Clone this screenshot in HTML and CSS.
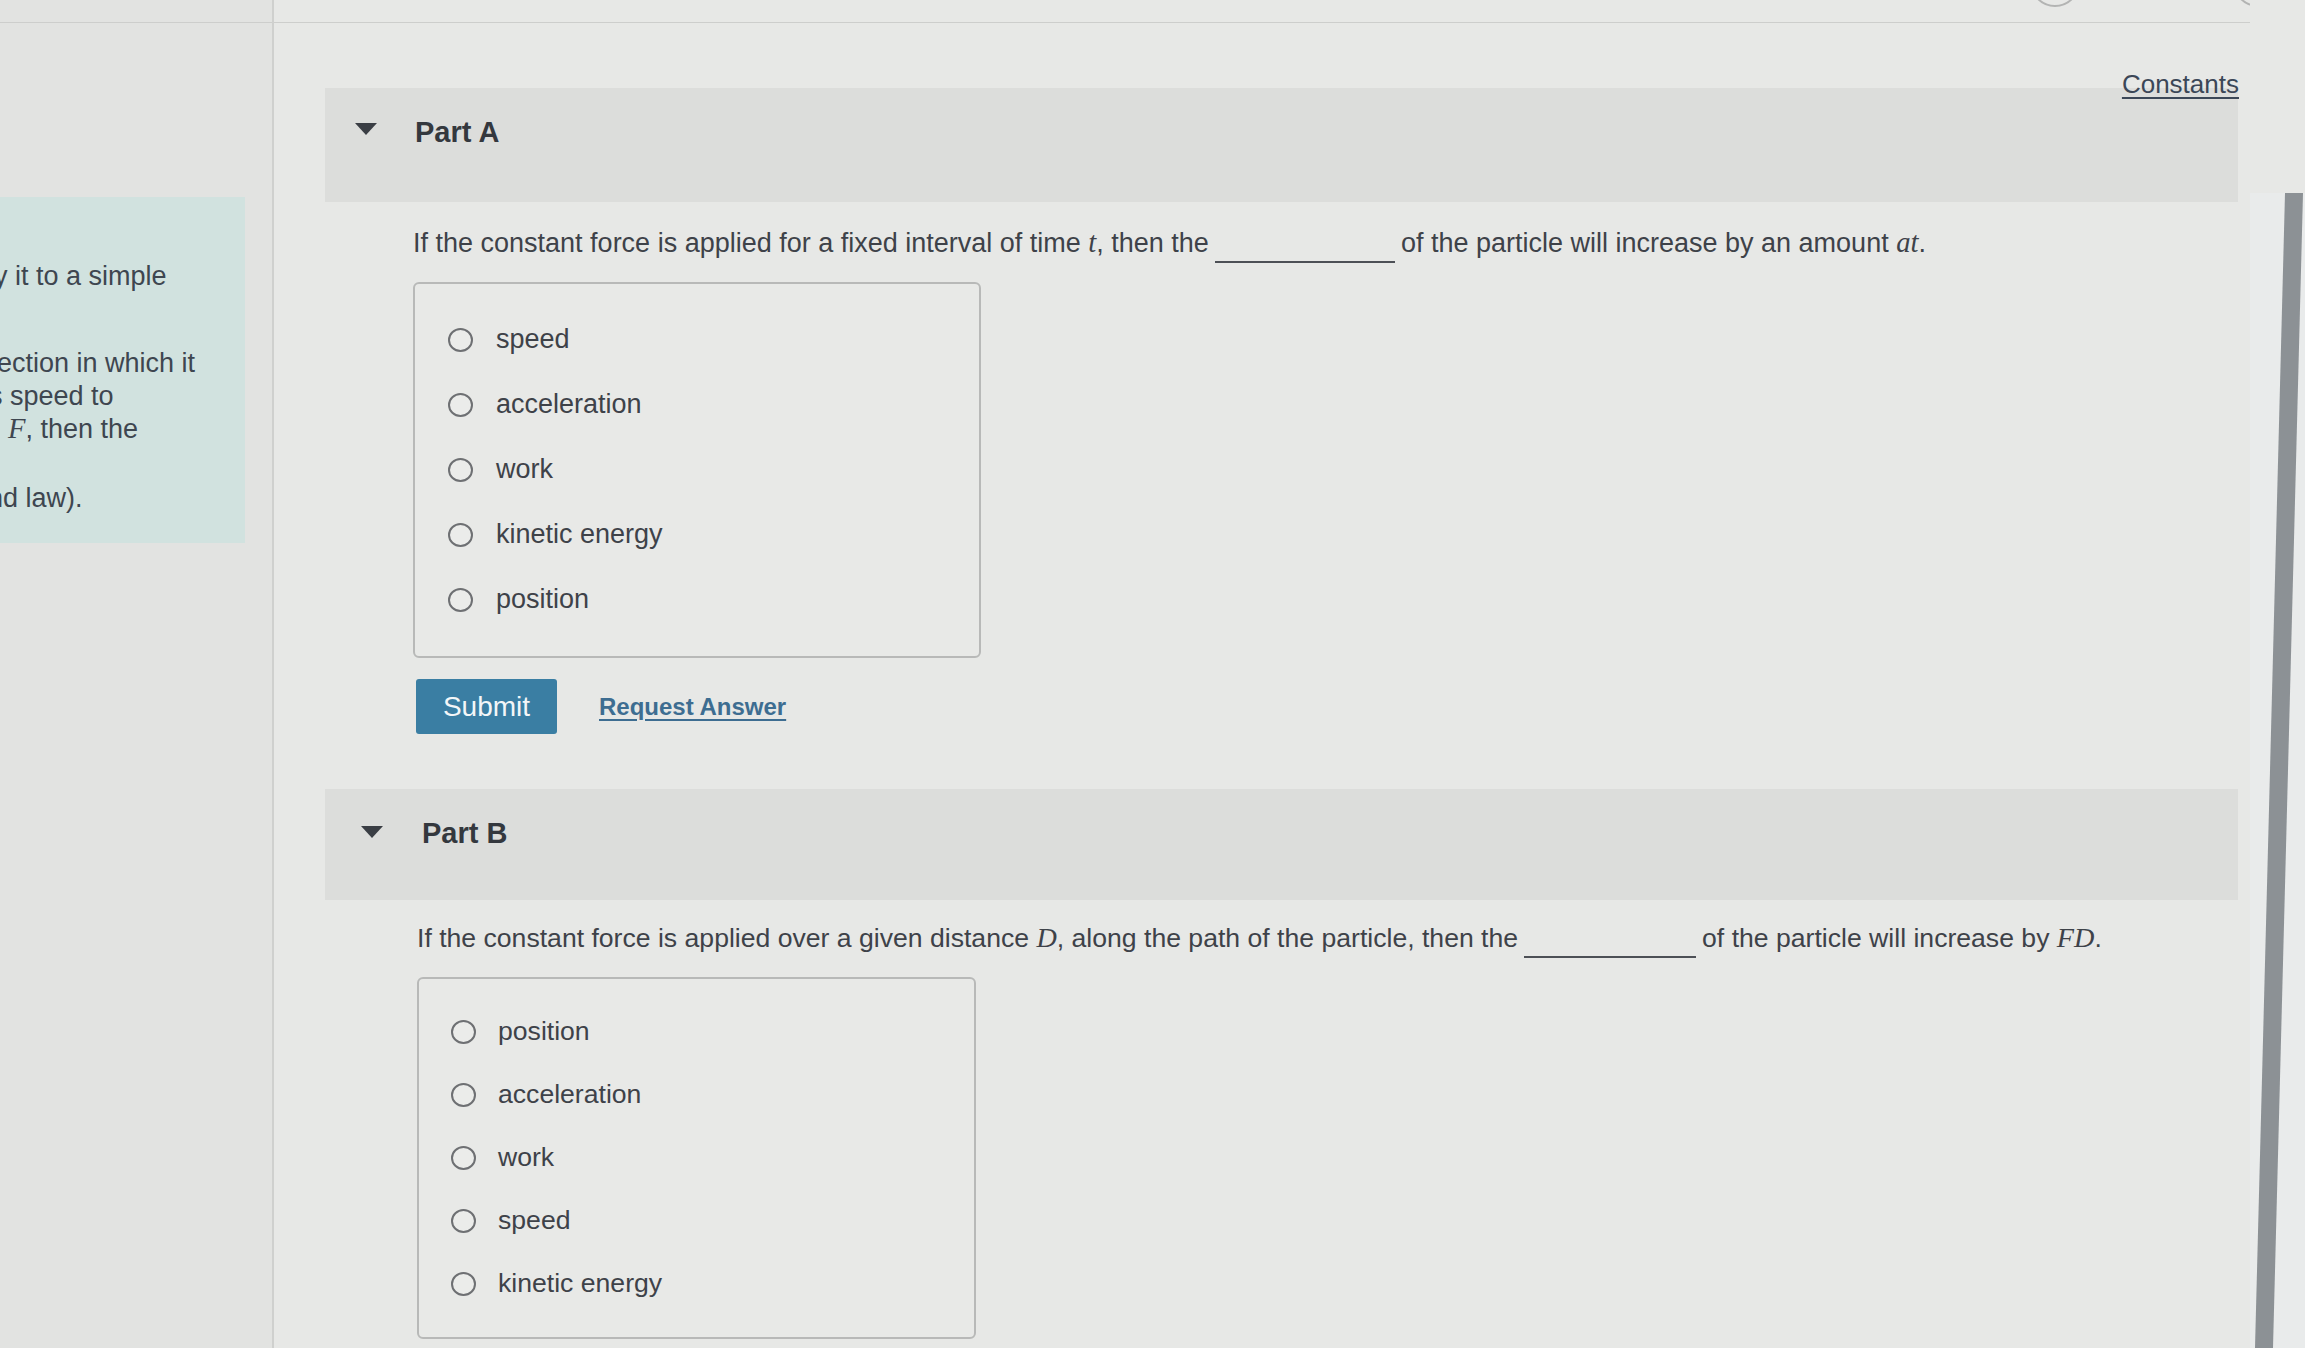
FILE: index.html
```html
<!DOCTYPE html>
<html lang="en">
<head>
<meta charset="utf-8">
<title>Part A / Part B</title>
<link rel="stylesheet" href="styles.css">
</head>
<body>
<div class="page">
  <aside class="sidebar">
    <div class="sb-top"></div>
    <div class="intro">
      <p class="para p1"><span class="line l1">y it to a simple</span></p>
      <p class="para p2">
        <span class="line l2">ection in which it</span>
        <span class="line l3">s speed to</span>
        <span class="line l4"><i class="math">F</i>, then the</span>
      </p>
      <p class="para p3"><span class="line l5">nd law).</span></p>
    </div>
  </aside>

  <main class="main">
    <div class="main-top"><span class="ring ring-a"></span><span class="ring ring-b"></span></div>
    <div class="constants-row"><a class="constants" href="#">Constants</a></div>

    <section class="part part-a">
      <header class="part-head"><span class="caret"></span><h2 class="part-title">Part A</h2></header>
      <div class="part-body">
        <p class="question">If the constant force is applied for a fixed interval of time <i class="math">t</i>, then the<span class="blank"></span>of the particle will increase by an amount <i class="math">at</i>.</p>
        <div class="choices">
          <label class="choice"><span class="radio"></span><span class="choice-text">speed</span></label>
          <label class="choice"><span class="radio"></span><span class="choice-text">acceleration</span></label>
          <label class="choice"><span class="radio"></span><span class="choice-text">work</span></label>
          <label class="choice"><span class="radio"></span><span class="choice-text">kinetic energy</span></label>
          <label class="choice"><span class="radio"></span><span class="choice-text">position</span></label>
        </div>
        <div class="actions">
          <button class="submit" type="button">Submit</button>
          <a class="request" href="#">Request Answer</a>
        </div>
      </div>
    </section>

    <section class="part part-b">
      <header class="part-head"><span class="caret"></span><h2 class="part-title">Part B</h2></header>
      <div class="part-body">
        <p class="question">If the constant force is applied over a given distance <i class="math">D</i>, along the path of the particle, then the<span class="blank"></span>of the particle will increase by <i class="math">FD</i>.</p>
        <div class="choices">
          <label class="choice"><span class="radio"></span><span class="choice-text">position</span></label>
          <label class="choice"><span class="radio"></span><span class="choice-text">acceleration</span></label>
          <label class="choice"><span class="radio"></span><span class="choice-text">work</span></label>
          <label class="choice"><span class="radio"></span><span class="choice-text">speed</span></label>
          <label class="choice"><span class="radio"></span><span class="choice-text">kinetic energy</span></label>
        </div>
      </div>
    </section>
  </main>

  <div class="edge"><div class="edge-top"></div><div class="edge-bar"></div></div>
</div>
</body>
</html>
```

FILE: styles.css
```css
* { box-sizing: border-box; }

html, body {
  margin: 0;
  padding: 0;
}

body {
  width: 2305px;
  height: 1348px;
  overflow: hidden;
  background: #e7e8e6;
  font-family: "Liberation Sans", Arial, sans-serif;
  color: #3c4047;
}

.page {
  display: flex;
  height: 1348px;
}

/* ---------- left sidebar ---------- */
.sidebar {
  width: 274px;
  flex: none;
  background: #e2e3e1;
  border-right: 2px solid #cfd0ce;
}

.sb-top {
  height: 23px;
  border-bottom: 1px solid #cdcecc;
}

.intro {
  width: 245px;
  height: 346px;
  margin-top: 174px;
  background: #d1e2df;
  overflow: hidden;
  font-size: 27px;
  line-height: 33px;
  color: #3e4650;
}

.para {
  margin: 0;
  white-space: nowrap;
}

.line { display: block; }

.p1 { padding-top: 63px; }
.p2 { padding-top: 54px; line-height: 32.5px; }
.p3 { padding-top: 36px; }

.l1 { margin-left: -6px; }
.l2 { margin-left: -3px; }
.l3 { margin-left: -11px; }
.l4 { margin-left: 8px; }
.l5 { margin-left: -12px; }

.math {
  font-family: "Liberation Serif", "Times New Roman", serif;
  font-style: italic;
  font-size: 1.06em;
}

/* ---------- main column ---------- */
.main {
  flex: 1;
  min-width: 0;
}

.main-top {
  height: 23px;
  border-bottom: 1px solid #cdcecc;
  display: flex;
  justify-content: flex-end;
  gap: 153px;
  margin-right: -33px;
}

.ring {
  width: 50px;
  height: 50px;
  margin-top: -43px;
  border: 2px solid #b3b4b3;
  border-radius: 50%;
}

.constants-row {
  height: 65px;
  padding-top: 46px;
  padding-right: 11px;
  text-align: right;
  line-height: 30px;
}

.constants {
  font-size: 26px;
  color: #3b4757;
  text-decoration: underline;
  text-decoration-thickness: 2px;
  text-underline-offset: 4px;
}

.part {
  margin-left: 51px;
  margin-right: 12px;
}

.part-head {
  display: flex;
  align-items: flex-start;
  height: 114px;
  padding: 24px 0 0 30px;
  background: #dcdddb;
}

.caret {
  width: 22px;
  height: 12px;
  margin-top: 11px;
  margin-right: 38px;
  background: #3a3e44;
  clip-path: polygon(0 0, 100% 0, 50% 100%);
}

.part-title {
  margin: 0;
  font-size: 29px;
  line-height: 40px;
  font-weight: bold;
  color: #34383e;
}

.part-body {
  padding-left: 88px;
}

.question {
  margin: 23px 0 0;
  font-size: 27px;
  line-height: 34px;
  white-space: nowrap;
  color: #3e4249;
}

.blank {
  display: inline-block;
  width: 180px;
  height: 1px;
  margin: 0 6px;
  border-bottom: 2px solid #4d5056;
  vertical-align: -11px;
}

.choices {
  width: 568px;
  margin-top: 19px;
  padding: 23px 33px 24px;
  border: 2px solid #b8b9b8;
  border-radius: 6px;
  background: #e8e9e7;
}

.choice {
  display: flex;
  align-items: center;
  gap: 23px;
  height: 65px;
  font-size: 27px;
  color: #3e4249;
}

.radio {
  width: 25px;
  height: 24px;
  flex: none;
  border: 2px solid #6e7073;
  border-radius: 50%;
  background: #ebecea;
}

.actions {
  display: flex;
  align-items: center;
  gap: 42px;
  margin-top: 21px;
  padding-left: 3px;
}

.submit {
  width: 141px;
  height: 55px;
  padding: 0;
  border: none;
  border-radius: 3px;
  background: #3a7ea3;
  color: #f3f6f8;
  font-family: "Liberation Sans", Arial, sans-serif;
  font-size: 28px;
}

.request {
  font-size: 24px;
  font-weight: bold;
  color: #3d6d91;
  text-decoration: underline;
  text-underline-offset: 4px;
}

/* Part B sits a little further away in the photo: slightly smaller */
.part-b {
  margin-top: 55px;
}

.part-b .part-head {
  height: 111px;
  padding-top: 24px;
  padding-left: 36px;
}

.part-b .caret {
  margin-top: 13px;
  margin-right: 39px;
}

.part-b .part-body {
  padding-left: 92px;
}

.part-b .question {
  margin-top: 21px;
  font-size: 26.6px;
}

.part-b .blank {
  width: 172px;
}

.part-b .choices {
  width: 559px;
  margin-top: 19px;
  padding: 21px 32px 22px;
}

.part-b .choice {
  height: 63px;
  gap: 22px;
  font-size: 26.6px;
}

/* ---------- right edge ---------- */
.edge {
  width: 55px;
  flex: none;
  display: flex;
  flex-direction: column;
  background: #e9ebeb;
}

.edge-top {
  height: 193px;
  background: #e7e8e6;
}

.edge-bar {
  flex: 1;
  background: #8c9195;
  clip-path: polygon(35px 0, 53px 0, 23px 100%, 5px 100%);
}
```
